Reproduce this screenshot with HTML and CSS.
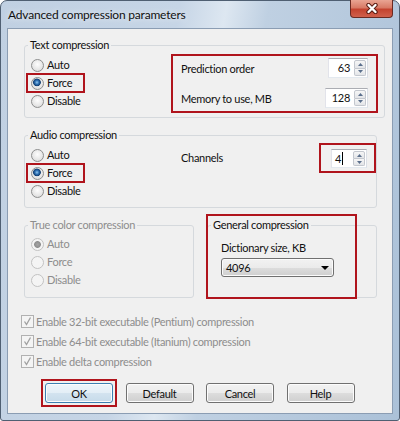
FILE: index.html
```html
<!DOCTYPE html>
<html lang="en">
<head>
    <meta charset="UTF-8">
    <meta name="viewport" content="width=device-width, initial-scale=1.0">
    <title>Advanced compression parameters</title>
    <link rel="stylesheet" href="styles.css">
</head>
<body>
    <div class="window">
        <div class="titlebar">
            <span class="title">Advanced compression parameters</span>
            <div class="close-btn">
                <svg width="14" height="11" viewBox="0 0 14 11">
                    <path d="M3.5 2 L10.5 9 M10.5 2 L3.5 9" stroke="#5a1d14" stroke-width="4.4" stroke-linecap="round"/>
                    <path d="M3.5 2 L10.5 9 M10.5 2 L3.5 9" stroke="#fff" stroke-width="2.4" stroke-linecap="round"/>
                </svg>
            </div>
        </div>

        <div class="client">
            <!-- Text compression -->
            <fieldset class="group group-text">
                <legend>Text compression</legend>
                <div class="radios">
                    <label class="radio-row"><span class="radio"></span>Auto</label>
                    <label class="radio-row marked"><span class="radio checked"></span>Force</label>
                    <label class="radio-row"><span class="radio"></span>Disable</label>
                </div>
                <div class="params">
                    <div class="param-row">
                        <span>Prediction order</span>
                        <div class="spin spin-63">
                            <span class="spin-value">63</span>
                            <span class="spin-btns">
                                <span class="spin-up"><svg width="5" height="3"><path d="M0 3 L2.5 0 L5 3 Z" fill="#5b6f8c"/></svg></span>
                                <span class="spin-down"><svg width="5" height="3"><path d="M0 0 L5 0 L2.5 3 Z" fill="#5b6f8c"/></svg></span>
                            </span>
                        </div>
                    </div>
                    <div class="param-row">
                        <span>Memory to use, MB</span>
                        <div class="spin spin-128">
                            <span class="spin-value">128</span>
                            <span class="spin-btns">
                                <span class="spin-up"><svg width="5" height="3"><path d="M0 3 L2.5 0 L5 3 Z" fill="#5b6f8c"/></svg></span>
                                <span class="spin-down"><svg width="5" height="3"><path d="M0 0 L5 0 L2.5 3 Z" fill="#5b6f8c"/></svg></span>
                            </span>
                        </div>
                    </div>
                </div>
            </fieldset>

            <!-- Audio compression -->
            <fieldset class="group group-audio">
                <legend>Audio compression</legend>
                <div class="radios">
                    <label class="radio-row"><span class="radio"></span>Auto</label>
                    <label class="radio-row marked"><span class="radio checked"></span>Force</label>
                    <label class="radio-row"><span class="radio"></span>Disable</label>
                </div>
                <span class="channels-label">Channels</span>
                <div class="channels-box">
                    <div class="spin spin-4">
                        <span class="spin-value edit">4<span class="caret"></span></span>
                        <span class="spin-btns">
                            <span class="spin-up"><svg width="5" height="3"><path d="M0 3 L2.5 0 L5 3 Z" fill="#5b6f8c"/></svg></span>
                            <span class="spin-down"><svg width="5" height="3"><path d="M0 0 L5 0 L2.5 3 Z" fill="#5b6f8c"/></svg></span>
                        </span>
                    </div>
                </div>
            </fieldset>

            <div class="row-groups">
                <!-- True color compression -->
                <fieldset class="group group-truecolor disabled">
                    <legend>True color compression</legend>
                    <div class="radios">
                        <label class="radio-row"><span class="radio checked"></span>Auto</label>
                        <label class="radio-row"><span class="radio"></span>Force</label>
                        <label class="radio-row"><span class="radio"></span>Disable</label>
                    </div>
                </fieldset>

                <!-- General compression -->
                <div class="general-wrap">
                    <fieldset class="group group-general">
                        <legend>General compression</legend>
                        <div class="dict">
                            <div class="dict-label">Dictionary size, KB</div>
                            <div class="dropdown">
                                <span>4096</span>
                                <svg width="8" height="4"><path d="M0 0 L8 0 L4 4 Z" fill="#000"/></svg>
                            </div>
                        </div>
                    </fieldset>
                    <div class="mark-general"></div>
                </div>
            </div>

            <div class="checks">
                <label class="check-row"><span class="checkbox"><svg width="11" height="11"><path d="M2.5 5.5 L4.5 8.5 L8.5 1.5" stroke="#a0a0a0" stroke-width="1.3" fill="none"/></svg></span>Enable 32-bit executable (Pentium) compression</label>
                <label class="check-row"><span class="checkbox"><svg width="11" height="11"><path d="M2.5 5.5 L4.5 8.5 L8.5 1.5" stroke="#a0a0a0" stroke-width="1.3" fill="none"/></svg></span>Enable 64-bit executable (Itanium) compression</label>
                <label class="check-row"><span class="checkbox"><svg width="11" height="11"><path d="M2.5 5.5 L4.5 8.5 L8.5 1.5" stroke="#a0a0a0" stroke-width="1.3" fill="none"/></svg></span>Enable delta compression</label>
            </div>

            <div class="buttons">
                <span class="mark-btn"><button class="btn btn-default">OK</button></span>
                <button class="btn">Default</button>
                <button class="btn">Cancel</button>
                <button class="btn">Help</button>
            </div>
        </div>
    </div>
</body>
</html>
```

FILE: styles.css
```css
/* Base */
* {
    box-sizing: border-box;
}

html, body {
    margin: 0;
    padding: 0;
    background: #fff;
}

body {
    font-family: Lato, "Noto Sans", sans-serif;
    font-size: 11px;
    letter-spacing: -0.3px;
    color: #111;
}

/* Window frame */
.window {
    width: 400px;
    height: 421px;
    display: flex;
    flex-direction: column;
    padding: 0 6px 6px;
    border: 1px solid #4f5f72;
    border-radius: 7px 7px 3px 3px;
    background: linear-gradient(100deg, #c0d0e2 0%, #c6d5e6 38%, #dde7f1 48%, #bfd0e2 57%, #abc1d8 100%);
}

.titlebar {
    height: 27px;
    display: flex;
    justify-content: space-between;
    align-items: flex-start;
}

.title {
    margin: 6px 0 0 1px;
    font-size: 12px;
    letter-spacing: -0.2px;
    line-height: 15px;
    color: #111;
    text-shadow: 0 0 6px rgba(255, 255, 255, 0.9);
}

.close-btn {
    width: 43px;
    height: 18px;
    margin-top: -1px;
    display: flex;
    justify-content: center;
    align-items: center;
    border: 1px solid #6a2a22;
    border-top: none;
    border-radius: 0 0 4px 4px;
    background: linear-gradient(#e9a493 0%, #d87a66 45%, #c4432f 55%, #d0604c 100%);
}

.client {
    flex: 1;
    display: flex;
    flex-direction: column;
    padding: 0 0 0 16px;
    border: 1px solid #8b9db3;
    background: #f0f0f0;
}

/* Group boxes */
.group {
    margin: 0;
    padding: 0 6px;
    height: 80px;
    border: 1px solid #d5d9dd;
    border-radius: 3px;
    display: flex;
    align-items: flex-start;
}

.group legend {
    margin-left: -3px;
    padding: 0 2px;
    line-height: 14px;
}

.group-text {
    width: 361px;
    margin-top: 9px;
    padding-top: 4px;
}

.group-audio {
    width: 353px;
    margin-top: 10px;
    padding-top: 4px;
    padding-right: 0;
}

.row-groups {
    display: flex;
    gap: 13px;
    margin-top: 10px;
}

.group-truecolor {
    width: 170px;
    padding-top: 3px;
}

.general-wrap {
    position: relative;
}

.group-general {
    width: 170px;
    padding-top: 8px;
}

/* Radio buttons */
.radios {
    display: flex;
    flex-direction: column;
    width: 150px;
}

.group-text .radios {
    width: 140px;
}

.radio-row {
    display: flex;
    align-items: center;
    height: 18px;
    line-height: 18px;
}

.radio-row.marked {
    width: 59px;
    height: 20px;
    margin: -1px 0 -1px -5px;
    padding-left: 3px;
    border: 2px solid #b0141c;
}

.radio {
    width: 13px;
    height: 13px;
    margin-right: 3px;
    border: 1px solid #8e8f8f;
    border-radius: 50%;
    background: radial-gradient(circle at 50% 40%, #fdfdfd 0%, #e6e6e6 60%, #cfcfcf 100%);
}

.radio.checked {
    background:
        radial-gradient(circle at 45% 40%, #8fc6ef 0, #2b6db0 2px, #123f72 3.5px, transparent 4.2px),
        radial-gradient(circle at 50% 40%, #fdfdfd 0%, #e6e6e6 60%, #cfcfcf 100%);
}

.disabled {
    color: #8d8d8d;
}

.disabled .radio {
    border-color: #c2c2c2;
    background: #f4f4f4;
}

.disabled .radio.checked {
    background:
        radial-gradient(circle, #a4a4a4 0, #8f8f8f 3px, transparent 3.8px),
        #f4f4f4;
}

/* Text params panel */
.params {
    width: 207px;
    height: 59px;
    margin: -2px 0 0 auto;
    padding: 2px 8px 0 8px;
    border: 2px solid #b0141c;
    display: flex;
    flex-direction: column;
    gap: 10px;
}

.param-row {
    height: 20px;
    display: flex;
    justify-content: space-between;
    align-items: center;
}

/* Spin boxes */
.spin {
    height: 20px;
    display: flex;
    border: 1px solid #abadb3;
    border-color: #abadb3 #dbdfe6 #e3e9ef #e2e3ea;
    background: #fff;
}

.spin-63 {
    width: 40px;
}

.spin-128 {
    width: 43px;
}

.spin-value {
    flex: 1;
    text-align: right;
    padding-right: 4px;
    line-height: 18px;
}

.spin-btns {
    width: 13px;
    display: flex;
    flex-direction: column;
    padding: 1px 1px 1px 0;
}

.spin-up, .spin-down {
    flex: 1;
    display: flex;
    justify-content: center;
    align-items: center;
    border: 1px solid #c3c7ce;
    background: linear-gradient(#f6f6f6, #e3e5e8);
}

.spin-up {
    border-radius: 2px 2px 0 0;
}

.spin-down {
    border-top: none;
    border-radius: 0 0 2px 2px;
}

.channels-label {
    flex: 1;
    margin-top: 3px;
    line-height: 18px;
}

.channels-box {
    width: 57px;
    height: 30px;
    margin-top: -3px;
    padding: 4px 0 0 10px;
    border: 2px solid #b0141c;
}

.spin-4 {
    width: 36px;
    height: 19px;
}

.spin-value.edit {
    text-align: left;
    padding: 0 0 0 3px;
    line-height: 17px;
    display: flex;
    align-items: center;
}

.caret {
    width: 1px;
    height: 13px;
    margin-left: 1px;
    background: #000;
}

/* General compression */
.dict {
    margin-left: 7px;
}

.dict-label {
    line-height: 15px;
}

.dropdown {
    width: 113px;
    height: 19px;
    margin-top: 3px;
    padding: 0 4px 0 4px;
    display: flex;
    justify-content: space-between;
    align-items: center;
    border: 1px solid #707070;
    border-radius: 3px;
    background: linear-gradient(#f2f2f2 0%, #ebebeb 50%, #dddddd 51%, #cfcfcf 100%);
    box-shadow: inset 0 0 0 1px #fbfbfb;
}

.mark-general {
    position: absolute;
    left: -1px;
    top: -4px;
    width: 151px;
    height: 85px;
    border: 2px solid #b0141c;
}

/* Checkboxes */
.checks {
    margin: 13px 0 0 -3px;
    color: #8d8d8d;
}

.check-row {
    display: flex;
    align-items: center;
    height: 20px;
}

.checkbox {
    width: 13px;
    height: 13px;
    margin-right: 2px;
    display: flex;
    justify-content: center;
    align-items: center;
    border: 1px solid #b1b1b1;
    background: #f4f4f4;
}

/* Buttons */
.buttons {
    display: flex;
    gap: 12.5px;
    margin: 12px 0 0 21px;
}

.mark-btn {
    display: flex;
    margin: -4px;
    padding: 2px;
    border: 2px solid #b0141c;
}

.btn {
    width: 68px;
    height: 20px;
    padding: 0;
    font-family: inherit;
    font-size: 11px;
    letter-spacing: inherit;
    color: #111;
    border: 1px solid #707070;
    border-radius: 3px;
    background: linear-gradient(#f2f2f2 0%, #ebebeb 50%, #dddddd 51%, #cfcfcf 100%);
    box-shadow: inset 0 0 0 1px #fcfcfc;
}

.btn-default {
    border-color: #3c7fb1;
    background: linear-gradient(#eef5fa 0%, #e3eef6 50%, #d3e3ef 51%, #c6dbea 100%);
}
```
